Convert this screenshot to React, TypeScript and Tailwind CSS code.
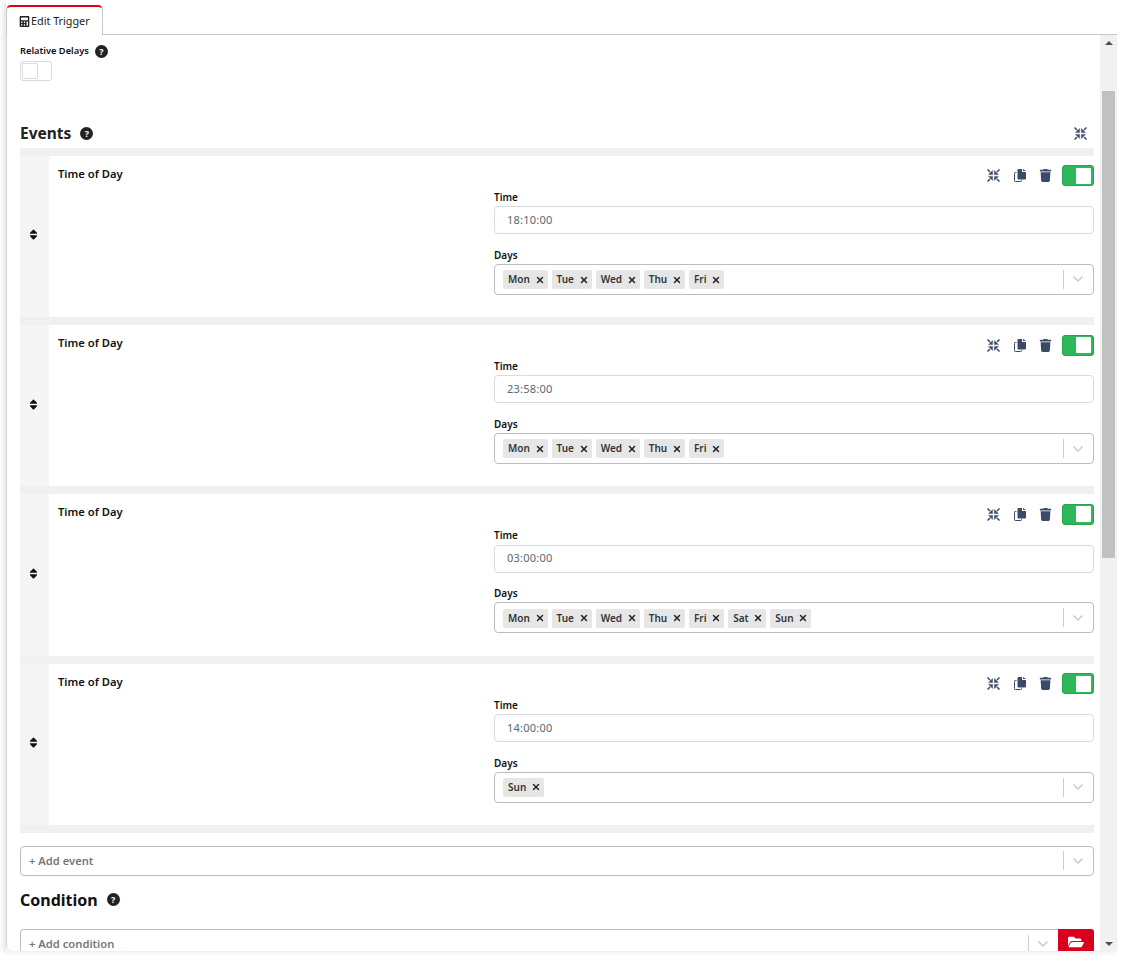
import { ChevronDown, X } from 'lucide-react'
import { FaCalculator, FaFolderOpen, FaSort, FaTrash } from 'react-icons/fa'

const WEEKDAYS = ['Mon', 'Tue', 'Wed', 'Thu', 'Fri']

const EVENTS = [
  { time: '18:10:00', days: WEEKDAYS },
  { time: '23:58:00', days: WEEKDAYS },
  { time: '03:00:00', days: [...WEEKDAYS, 'Sat', 'Sun'] },
  { time: '14:00:00', days: ['Sun'] },
]

// four arrows pointing at the middle, the collapse icon
function CompressIcon() {
  return (
    <svg width="13" height="13" viewBox="0 0 13 13" className="shrink-0 fill-[#3b4a66] stroke-[#3b4a66]" strokeWidth="0.4">
      <path d="M5.600 1.500v4.100H1.500zM7.400 1.500v4.100h4.100zM5.600 11.500V7.400H1.500zM7.400 11.500V7.400h4.100z" />
      <path d="M.5.500 3 3M12.500.500 10 3M.5 12.500 3 10M12.500 12.500 10 10" fill="none" strokeWidth="1.500" />
    </svg>
  )
}

function CopyIcon() {
  return (
    <svg width="12" height="13" viewBox="0 0 12 13" className="shrink-0">
      <path d="M4.500 0H8v3h4v6.500a1 1 0 0 1-1 1H4.500a1 1 0 0 1-1-1V1a1 1 0 0 1 1-1zM9 0l3 2H9z" className="fill-[#3b4a66]" />
      <path d="M2.500 3.500H1.300a.8.8 0 0 0-.8.800v7.400a.8.8 0 0 0 .8.800h5.400a.8.8 0 0 0 .8-.8v-.7" fill="none" strokeWidth="1" className="stroke-[#3b4a66]" />
    </svg>
  )
}

function Help() {
  return (
    <span className="flex h-[13px] w-[13px] shrink-0 items-center justify-center rounded-full bg-[#222] text-[9px] leading-none font-bold text-white">
      ?
    </span>
  )
}

function Tag({ label }: { label: string }) {
  return (
    <span className="flex h-[19px] items-center gap-[4.700px] rounded-[2px] bg-[#e6e6e6] pl-[5px] pr-[3px] text-[10px] font-semibold text-[#333]">
      {label}
      <X size={10} strokeWidth={3.500} className="text-[#222]" />
    </span>
  )
}

function SelectBox({ children, short, joined }: { children: React.ReactNode; short?: boolean; joined?: boolean }) {
  return (
    <div
      className={`flex flex-1 items-center border border-[#bdbdbd] bg-white pl-[8px] ${short ? 'h-[30px]' : 'h-[31px]'} ${
        joined ? 'rounded-l-[4px] border-r-0' : 'rounded-[4px]'
      }`}
    >
      <div className="flex flex-1 items-center gap-[4px] overflow-hidden pt-[0.6px]">{children}</div>
      <div className="h-[19px] w-px bg-[#cccccc]" />
      <ChevronDown size={16} strokeWidth={2.500} className="ml-[6px] mr-[7px] text-[#cccccc]" />
    </div>
  )
}

function EventCard({ time, days }: { time: string; days: string[] }) {
  return (
    <div className="flex h-[161.300px] bg-white">
      <div className="flex w-[29px] items-center justify-center bg-[#f5f5f5] pb-[3px] pr-[3px]">
        <FaSort size={13} className="text-[#111]" />
      </div>
      <div className="flex flex-1 pl-[9px] pt-[10px]">
        <div className="w-[436px] text-[11.200px] font-semibold leading-[15px] text-[#111]">Time of Day</div>
        <div className="flex w-[600px] flex-col">
          <div className="-mt-[1px] flex h-[22px] items-center justify-end">
            <CompressIcon />
            <span className="ml-[14px]">
              <CopyIcon />
            </span>
            <FaTrash size={13} className="ml-[13px] text-[#3b4a66]" />
            <div className="ml-[10px] flex h-[21px] w-[32px] items-center justify-end rounded-[3px] border border-[#27a34f] bg-[#2eb85c] px-[2px]">
              <div className="h-[16px] w-[15px] rounded-[1px] bg-white" />
            </div>
          </div>
          <div className="mt-[3px] text-[10px] font-semibold leading-[14px] text-[#111]">Time</div>
          <div className="mt-[2.300px] flex h-[28px] items-center rounded-[4px] border border-[#d8dbe0] pl-[12px] text-[11px] tracking-[0.25px] text-[#5c6873]">
            {time}
          </div>
          <div className="mt-[13.700px] text-[10px] font-semibold leading-[14px] text-[#111]">Days</div>
          <div className="mt-[2px] flex">
            <SelectBox>
              {days.map(d => (
                <Tag key={d} label={d} />
              ))}
            </SelectBox>
          </div>
        </div>
      </div>
    </div>
  )
}

export default function App() {
  return (
    <div className="h-[963px] w-[1125px] overflow-hidden bg-white font-['Noto_Sans','Open_Sans',sans-serif]">
      <div className="ml-[6px] flex h-[951px] w-[1111px] flex-col pt-[5px] shadow-[-3px_1px_5px_rgba(0,0,0,0.1)]">
        {/* tab strip */}
        <div className="flex h-[30px] shrink-0 border-b border-[#c4c9d0]">
          <div className="-mb-px flex h-[30px] w-[97px] items-center gap-[1px] rounded-t-[5px] border-x border-t-2 border-x-[#c4c9d0] border-t-[#d9001b] bg-white pl-[12px] text-[10.800px] text-[#222]">
            <FaCalculator size={11} className="text-[#222]" />
            Edit Trigger
          </div>
        </div>

        <div className="flex min-h-0 flex-1 rounded-bl-[6px] border-l border-[#d4d4d4]">
          {/* form */}
          <div className="min-w-0 flex-1 overflow-hidden pl-[13px] pr-[6px]">
            <div className="mt-[8px] flex h-[16px] items-center gap-[6px] text-[9.300px] font-semibold text-[#111]">
              Relative Delays
              <Help />
            </div>
            <div className="mt-[2px] flex h-[20px] w-[32px] rounded-[3px] border border-[#d8dbe0] p-[1px]">
              <div className="h-[16px] w-[16px] rounded-[1px] border border-[#d8dbe0]" />
            </div>

            <div className="mt-[42px] flex h-[20px] items-center justify-between">
              <div className="flex items-center gap-[9px] pt-[1px] text-[15.500px] font-bold text-[#222]">
                Events
                <Help />
              </div>
              <div className="mr-[7px]">
                <CompressIcon />
              </div>
            </div>

            <div className="mt-[4.800px] flex flex-col gap-[8px] border-y-[8px] border-[#f0f0f0] bg-[#f0f0f0]">
              {EVENTS.map(ev => (
                <EventCard key={ev.time} time={ev.time} days={ev.days} />
              ))}
            </div>

            <div className="mt-[13px] flex">
              <SelectBox short>
                <span className="text-[11.200px] font-semibold text-[#777]">+ Add event</span>
              </SelectBox>
            </div>

            <div className="mt-[12px] flex h-[24px] items-center gap-[9px] text-[16px] font-bold text-[#111]">
              Condition
              <Help />
            </div>

            <div className="mt-[17px] flex">
              <SelectBox joined>
                <span className="text-[11.200px] font-semibold text-[#777]">+ Add condition</span>
              </SelectBox>
              <div className="flex h-[31px] w-[36px] items-center justify-center rounded-r-[3px] bg-[#d9001b] pb-[5px]">
                <FaFolderOpen size={16} className="text-white" />
              </div>
            </div>
          </div>

          {/* scrollbar */}
          <div className="flex w-[17px] shrink-0 flex-col items-center bg-[#f1f1f1]">
            <div className="mt-[6px] h-0 w-0 border-x-[4px] border-b-[4px] border-x-transparent border-b-[#505050]" />
            <div className="mt-[46px] h-[467px] w-[13px] bg-[#c1c1c1]" />
            <div className="mt-auto mb-[5px] h-0 w-0 border-x-[4px] border-t-[4px] border-x-transparent border-t-[#505050]" />
          </div>
        </div>
      </div>
    </div>
  )
}
